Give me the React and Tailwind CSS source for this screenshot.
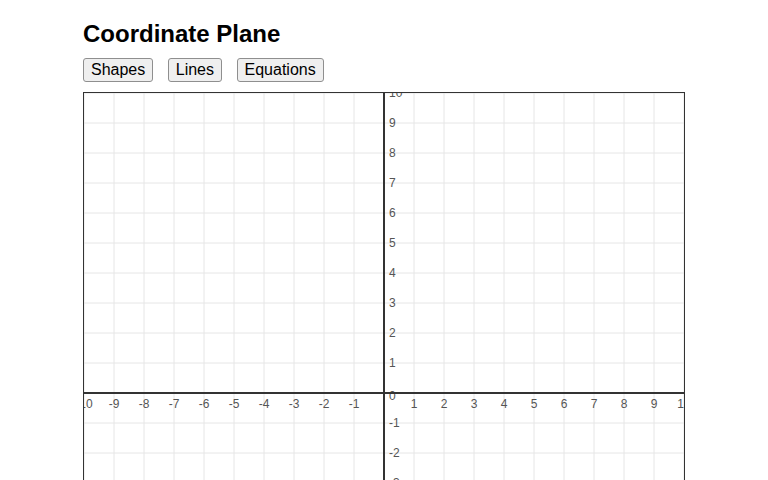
import React from "react";

export default function App() {
  const ticks = [];
  for (let i = 0; i <= 20; i++) ticks.push(i * 30);
  const labelsX = [];
  for (let i = -10; i <= 10; i++) if (i !== 0) labelsX.push(i);
  const labelsY = [];
  for (let i = -10; i <= 10; i++) labelsY.push(i);

  return (
    <div className="w-full bg-white" style={{ fontFamily: '"Liberation Sans", Arial, sans-serif' }}>
      <div className="w-[602px] mx-auto">
        <h2 className="text-[24px] leading-[27px] font-bold text-black pt-[20px] mb-[11px]">Coordinate Plane</h2>
        <div className="flex gap-[14.5px]">
          {["Shapes", "Lines", "Equations"].map((t) => (
            <button
              key={t}
              className="text-[16px] leading-[18px] py-[2px] px-[7px] border border-[#8f8f8f] bg-[#efefef] rounded-[3px] text-black"
            >
              {t}
            </button>
          ))}
        </div>
        <div className="mt-[10px] border border-[#333] w-[602px] h-[602px] overflow-hidden">
          <svg width="600" height="600" viewBox="0 0 600 600" className="block">
            {ticks.map((t) => (
              <line key={"v" + t} x1={t} y1={0} x2={t} y2={600} stroke="#e6e6e6" strokeWidth="1" />
            ))}
            {ticks.map((t) => (
              <line key={"h" + t} x1={0} y1={t} x2={600} y2={t} stroke="#e6e6e6" strokeWidth="1" />
            ))}
            {labelsX.map((i) => (
              <text
                key={"lx" + i}
                x={300 + i * 30}
                y={315}
                textAnchor="middle"
                fontSize="12"
                fill="#555"
                fontFamily='"Liberation Sans", Arial, sans-serif'
              >
                {i}
              </text>
            ))}
            {labelsY.map((i) => (
              <text
                key={"ly" + i}
                x={305}
                y={i === 0 ? 307 : 300 - i * 30 + 4}
                fontSize="12"
                fill="#555"
                fontFamily='"Liberation Sans", Arial, sans-serif'
              >
                {i}
              </text>
            ))}
            <line x1={0} y1={300} x2={600} y2={300} stroke="#333" strokeWidth="2" />
            <line x1={300} y1={0} x2={300} y2={600} stroke="#333" strokeWidth="2" />
          </svg>
        </div>
      </div>
    </div>
  );
}
